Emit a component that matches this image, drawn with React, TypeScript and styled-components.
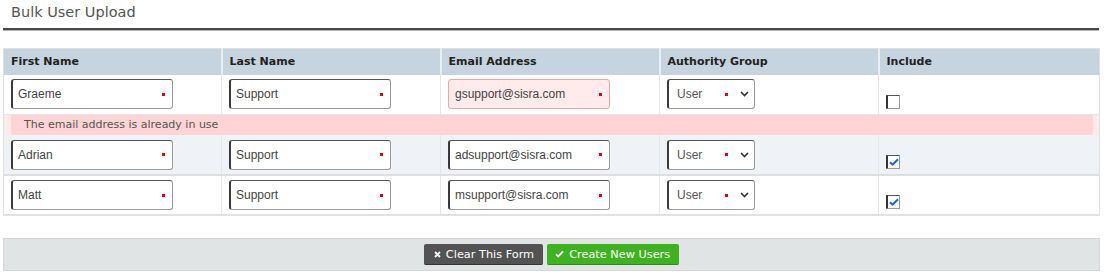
import React from "react";
import styled, { createGlobalStyle } from "styled-components";

const Global = createGlobalStyle`
  html, body { margin: 0; padding: 0; background: #fff; }
  body { font-family: "DejaVu Sans", Verdana, sans-serif; }
  * { box-sizing: border-box; }
`;

const Page = styled.div`
  padding: 0 5px 0 3px;
  width: 1104px;
`;

const Title = styled.h1`
  margin: 0;
  height: 30px;
  padding: 4px 8px 0;
  font-size: 14.5px;
  line-height: 17px;
  font-weight: normal;
  color: #555;
  border-bottom: 2px solid #474747;
  box-shadow: 0 1px 0 #b5b5b5;
`;

const Table = styled.table`
  margin-top: 18px;
  width: 1096px;
  border-collapse: collapse;
  table-layout: fixed;
  border: 1px solid #e0e0e0;
  border-bottom: 2px solid #e2e2e2;
`;

const Th = styled.th`
  height: 26px;
  padding: 0 7px;
  text-align: left;
  font-size: 11px;
  font-weight: bold;
  color: #222;
  background: #c6d4df;
  border-left: 2px solid #e9eef2;
  &:first-child { border-left: 0; }
`;

const Tr = styled.tr<{ $alt?: boolean; $sep?: boolean }>`
  background: ${(p) => (p.$alt ? "#eff3f7" : "#fff")};
  border-bottom: ${(p) => (p.$sep ? "2px solid #dedede" : "1px solid #e6e6e6")};
`;

const Td = styled.td<{ $check?: boolean }>`
  height: 40px;
  padding: ${(p) => (p.$check ? "0 7px 5px" : "4px 7px 4px")};
  vertical-align: ${(p) => (p.$check ? "bottom" : "middle")};
  border-left: 1px solid #e6e6e6;
  &:first-child { border-left: 0; }
`;

const ErrorCell = styled.td`
  height: 20px;
  padding: 0 6px 0 7px;
  background: #fdeaea;
`;

const ErrorBar = styled.div`
  height: 20px;
  line-height: 20px;
  padding-left: 13px;
  background: #ffd4d4;
  font-size: 11px;
  color: #555;
`;

const Field = styled.div<{ $error?: boolean; $w: number }>`
  display: flex;
  align-items: center;
  width: ${(p) => p.$w}px;
  height: 30px;
  padding: 0 5px 0 5px;
  border-radius: 3px;
  background: ${(p) => (p.$error ? "#ffebeb" : "#fff")};
  border: 1px solid ${(p) => (p.$error ? "#eaa9a9" : "#9c9c9c")};
  border-left: ${(p) => (p.$error ? "1px solid #eaa9a9" : "2px solid #3a3a3a")};
  border-top-color: ${(p) => (p.$error ? "#eaa9a9" : "#555")};
  padding-left: ${(p) => (p.$error ? "6px" : "5px")};
`;

const Input = styled.input`
  flex: 1;
  min-width: 0;
  border: 0;
  outline: 0;
  background: transparent;
  padding: 0;
  font-family: "Liberation Sans", Arial, sans-serif;
  font-size: 12px;
  color: #444;
`;

const SelectText = styled.span`
  flex: 1;
  padding-left: 3px;
  font-family: "Liberation Sans", Arial, sans-serif;
  font-size: 12px;
  color: #555;
`;

const Dot = styled.span<{ $gap?: number }>`
  width: 3px;
  height: 3px;
  background: #e0000b;
  margin-right: ${(p) => p.$gap ?? 2}px;
  flex: none;
`;

const Chevron = styled.svg`
  width: 9px;
  height: 6px;
  flex: none;
`;

const Box = styled.span`
  display: flex;
  align-items: center;
  justify-content: center;
  width: 14px;
  height: 14px;
  background: #fff;
  border: 1px solid #9a9a9a;
  border-left: 2px solid #333;
  border-top-color: #555;
  border-radius: 1px;
`;

const Footer = styled.div`
  margin-top: 22px;
  width: 1097px;
  height: 33px;
  background: #e1e4e5;
  border: 1px solid #d4d6d7;
  display: flex;
  align-items: center;
  justify-content: center;
  gap: 4px;
`;

const Button = styled.button<{ $green?: boolean }>`
  display: flex;
  align-items: center;
  gap: 5px;
  height: 21px;
  padding: 0 9px 0 ${(p) => (p.$green ? "8px" : "10px")};
  border: 0;
  border-radius: 2px;
  background: ${(p) => (p.$green ? "#3fb21f" : "#535353")};
  border-bottom: 1px solid ${(p) => (p.$green ? "#2e8c16" : "#333")};
  color: #fff;
  font-family: "DejaVu Sans", Verdana, sans-serif;
  font-size: 11.3px;
  cursor: pointer;
`;

type Row = {
  first: string;
  last: string;
  email: string;
  include: boolean;
  emailError?: string;
};

const rows: Row[] = [
  { first: "Graeme", last: "Support", email: "gsupport@sisra.com", include: false, emailError: "The email address is already in use" },
  { first: "Adrian", last: "Support", email: "adsupport@sisra.com", include: true },
  { first: "Matt", last: "Support", email: "msupport@sisra.com", include: true },
];

const TextField = ({ value, error }: { value: string; error?: boolean }) => (
  <Field $w={162} $error={error}>
    <Input defaultValue={value} />
    <Dot />
  </Field>
);

const SelectField = () => (
  <Field $w={88}>
    <SelectText>User</SelectText>
    <Dot $gap={12} />
    <Chevron viewBox="0 0 9 6">
      <path d="M1 1l3.5 3.5L8 1" fill="none" stroke="#333" strokeWidth="1.6" />
    </Chevron>
  </Field>
);

const Check = ({ on }: { on: boolean }) => (
  <Box>
    {on && (
      <svg width="10" height="8" viewBox="0 0 10 8">
        <path d="M1 4.2l2.6 2.4L9 1.2" fill="none" stroke="#1768d6" strokeWidth="2" />
      </svg>
    )}
  </Box>
);

export default function App() {
  return (
    <Page>
      <Global />
      <Title>Bulk User Upload</Title>
      <Table>
        <colgroup>
          <col style={{ width: 218 }} />
          <col style={{ width: 219 }} />
          <col style={{ width: 219 }} />
          <col style={{ width: 219 }} />
          <col style={{ width: 221 }} />
        </colgroup>
        <thead>
          <tr>
            <Th>First Name</Th>
            <Th>Last Name</Th>
            <Th>Email Address</Th>
            <Th>Authority Group</Th>
            <Th>Include</Th>
          </tr>
        </thead>
        <tbody>
          {rows.map((r, i) => (
            <React.Fragment key={i}>
              <Tr $alt={i === 1} $sep={i === 1}>
                <Td><TextField value={r.first} /></Td>
                <Td><TextField value={r.last} /></Td>
                <Td><TextField value={r.email} error={!!r.emailError} /></Td>
                <Td><SelectField /></Td>
                <Td $check><Check on={r.include} /></Td>
              </Tr>
              {r.emailError && (
                <tr>
                  <ErrorCell colSpan={5}>
                    <ErrorBar>{r.emailError}</ErrorBar>
                  </ErrorCell>
                </tr>
              )}
            </React.Fragment>
          ))}
        </tbody>
      </Table>
      <Footer>
        <Button>
          <svg width="7" height="7" viewBox="0 0 7 7">
            <path d="M1 1l5 5M6 1L1 6" stroke="#fff" strokeWidth="1.8" />
          </svg>
          Clear This Form
        </Button>
        <Button $green>
          <svg width="9" height="8" viewBox="0 0 9 8">
            <path d="M1 4.3l2.3 2.2L8 1.3" fill="none" stroke="#fff" strokeWidth="1.9" />
          </svg>
          Create New Users
        </Button>
      </Footer>
    </Page>
  );
}
